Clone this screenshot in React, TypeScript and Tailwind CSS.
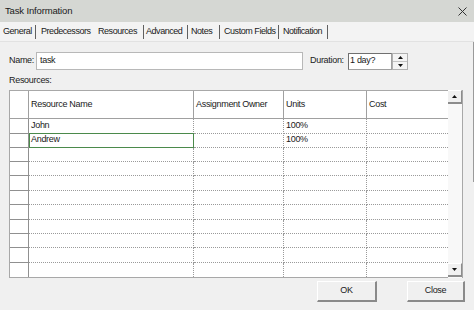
const tabs = [
  { label: "General", w: "w-[32px]", gap: "mr-[5px]", sep: true },
  { label: "Predecessors", w: "w-[57px]", gap: "", sep: false },
  { label: "Resources", w: "w-[45px]", gap: "mr-[2px]", sep: true },
  { label: "Advanced", w: "w-[41px]", gap: "mr-[3px]", sep: true },
  { label: "Notes", w: "w-[28px]", gap: "mr-[4px]", sep: true },
  { label: "Custom Fields", w: "w-[54px]", gap: "mr-[4px]", sep: true },
  { label: "Notification", w: "w-[44px]", gap: "", sep: true },
];

const rows = [
  { name: "John", units: "100%" },
  { name: "Andrew", units: "100%", selected: true },
  {}, {}, {}, {}, {}, {}, {}, {}, {},
];

function Arrow({ dir }: { dir: "up" | "down" }) {
  return (
    <svg width="5" height="3" viewBox="0 0 5 3">
      {dir === "up" ? <path d="M0 3 L2.5 0 L5 3 Z" fill="#111" /> : <path d="M0 0 L2.5 3 L5 0 Z" fill="#111" />}
    </svg>
  );
}

export default function App() {
  return (
    <div
      className="w-[474px] h-[310px] flex flex-col bg-[#f0f0f0] text-[9px] text-[#1a1a1a] overflow-hidden tracking-[-0.3px]"
      style={{ fontFamily: '"Liberation Sans", Arial, sans-serif' }}
    >
      {/* ── Title bar ── */}
      <div className="h-[22px] flex items-center justify-between pl-[5px] pr-[7px] bg-[#d5d7d3]">
        <span className="text-[9.5px] tracking-[-0.15px]">Task Information</span>
        <svg width="9" height="9" viewBox="0 0 9 9">
          <path d="M0.5 0.5 L8.5 8.5 M8.5 0.5 L0.5 8.5" stroke="#333" strokeWidth="1" />
        </svg>
      </div>

      {/* ── Tabs ── */}
      <div className="h-[19px] flex items-center pl-[3px] bg-[#f3f3f3] tracking-[-0.45px]">
        {tabs.map((t) => (
          <div key={t.label} className={`flex items-center shrink-0 ${t.gap}`}>
            <div className={`${t.w} h-[15px] flex items-center whitespace-nowrap`}>{t.label}</div>
            {t.sep && <div className="w-px h-[14px] bg-[#606060]" />}
          </div>
        ))}
      </div>

      {/* ── Panel ── */}
      <div className="flex-1 flex border-t border-[#e2e2e2]">
        <div className="flex-1 flex flex-col pl-[9px] pr-[10px]">
          {/* Name / Duration */}
          <div className="flex items-center mt-[10px] h-[18px]">
            <span className="w-[27px]">Name:</span>
            <div className="w-[267px] h-[18px] bg-white border border-[#b8b8b8] flex items-center pl-[3px]">task</div>
            <span className="ml-[7px] w-[38px]">Duration:</span>
            <div className="w-[44px] h-[17px] bg-white border border-[#a0a0a0] border-t-[#707070] border-l-[#707070] flex items-center pl-[1px]">
              1 day?
            </div>
            <div className="w-[16px] h-[17px] flex flex-col border border-[#b0b0b0] bg-[#f4f4f4]">
              <div className="flex-1 flex items-center justify-center border-b border-[#c4c4c4]">
                <Arrow dir="up" />
              </div>
              <div className="flex-1 flex items-center justify-center">
                <Arrow dir="down" />
              </div>
            </div>
          </div>

          <div className="mt-[4px] h-[14px] flex items-center">Resources:</div>

          {/* Table */}
          <div className="mt-[2px] flex">
            <div className="flex flex-col border-t border-l border-b border-[#a8a8a8] bg-white">
              <div className="grid grid-cols-[19px_165px_90px_83px_81px] h-[28px] border-b border-[#a0a0a0]">
                <div className="border-r border-[#a0a0a0]" />
                <div className="border-r border-[#a0a0a0] flex items-center pl-[2px]">Resource Name</div>
                <div className="border-r border-[#a0a0a0] flex items-center pl-[2px]">Assignment Owner</div>
                <div className="border-r border-[#a0a0a0] flex items-center pl-[2px]">Units</div>
                <div className="flex items-center pl-[2px]">Cost</div>
              </div>
              {rows.map((r, i) => (
                <div key={i} className="grid grid-cols-[19px_165px_90px_83px_81px] h-[14.36px]">
                  <div className={`border-r border-[#909090] ${i < rows.length - 1 ? "border-b" : ""}`} />
                  <div
                    className={`border-r border-dotted border-[#9a9a9a] ${i < rows.length - 1 ? "border-b" : ""} flex items-center pl-[2px] ${r.selected ? "outline-1 outline-[#4b8a4b] -outline-offset-1" : ""}`}
                  >
                    {r.name}
                  </div>
                  <div className={`border-r border-dotted border-[#9a9a9a] ${i < rows.length - 1 ? "border-b" : ""}`} />
                  <div className={`border-r border-dotted border-[#9a9a9a] ${i < rows.length - 1 ? "border-b" : ""} flex items-center pl-[2px]`}>
                    {r.units}
                  </div>
                  <div className={`border-dotted border-[#9a9a9a] ${i < rows.length - 1 ? "border-b" : ""}`} />
                </div>
              ))}
            </div>

            {/* Scrollbar */}
            <div className="w-[15px] flex flex-col justify-between bg-[#f8f8f8] border-r border-[#a8a8a8]">
              <div className="h-[14px] flex items-center justify-center bg-[#f0f0f0] border-b-2 border-r border-[#8c8c8c] border-t border-t-white">
                <Arrow dir="up" />
              </div>
              <div className="h-[14px] mb-[1px] flex items-center justify-center bg-[#f0f0f0] border-b-2 border-r border-[#8c8c8c] border-t border-t-white">
                <Arrow dir="down" />
              </div>
            </div>
          </div>

          {/* Buttons */}
          <div className="mt-[3px] flex justify-end gap-[30px]">
            <button className="w-[60px] h-[21px] bg-[#f0f0f0] border border-t-white border-l-white border-b-2 border-r-2 border-b-[#8a8a8a] border-r-[#8a8a8a] text-[9px] tracking-[-0.3px]">
              OK
            </button>
            <button className="w-[58px] h-[21px] bg-[#f0f0f0] border border-t-white border-l-white border-b-2 border-r-2 border-b-[#8a8a8a] border-r-[#8a8a8a] text-[9px] tracking-[-0.3px] mr-[-2px]">
              Close
            </button>
          </div>
        </div>
        <div className="w-[2px] h-[140px] bg-[#9a9a9a]" />
      </div>
    </div>
  );
}
